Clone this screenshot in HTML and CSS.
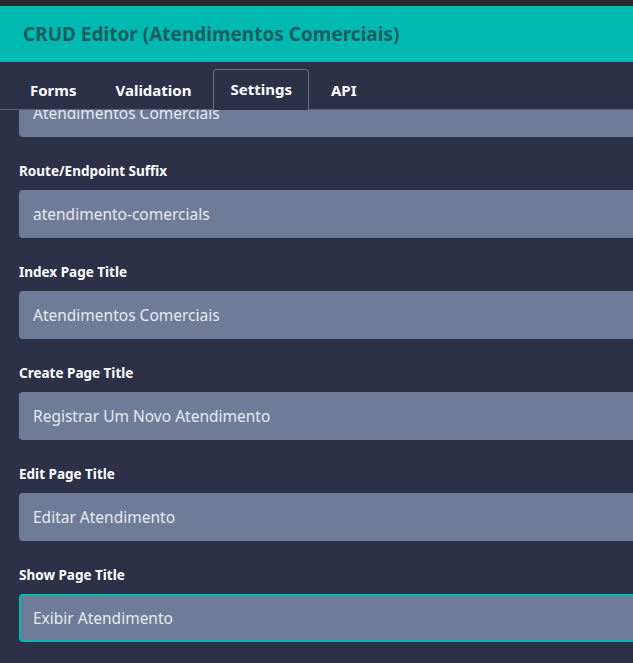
FILE: index.html
```html
<html>
  <head>
    <link rel="stylesheet" href="styles.css">
  </head>
  <body>
    <div class="topline"></div>
    <div class="header">CRUD Editor (Atendimentos Comerciais)</div>
    <div class="tabs">
      <div class="tab">Forms</div>
      <div class="tab">Validation</div>
      <div class="tab active">Settings</div>
      <div class="tab">API</div>
    </div>
    <div class="content">
      <div class="fields">
        <div class="field">
          <div class="input">Atendimentos Comerciais</div>
        </div>
        <div class="field">
          <div class="label">Route/Endpoint Suffix</div>
          <div class="input">atendimento-comercials</div>
        </div>
        <div class="field">
          <div class="label">Index Page Title</div>
          <div class="input">Atendimentos Comerciais</div>
        </div>
        <div class="field">
          <div class="label">Create Page Title</div>
          <div class="input">Registrar Um Novo Atendimento</div>
        </div>
        <div class="field">
          <div class="label">Edit Page Title</div>
          <div class="input">Editar Atendimento</div>
        </div>
        <div class="field">
          <div class="label">Show Page Title</div>
          <div class="input focused">Exibir Atendimento</div>
        </div>
      </div>
    </div>
  </body>
</html>
```

FILE: styles.css
```css
html, body {
  margin: 0;
  height: 100%;
  overflow: hidden;
}
body {
  background-color: #2c3148;
  font-family: "Noto Sans", sans-serif;
  color: #ffffff;
}
.topline {
  height: 6px;
  background-color: #282a2c;
}
.header {
  height: 56px;
  background-color: #00b9b1;
  color: #165d5f;
  font-size: 19px;
  font-weight: bold;
  line-height: 56px;
  padding-left: 23px;
}
.tabs {
  display: flex;
  align-items: flex-end;
  height: 48px;
  padding-left: 13px;
  gap: 5px;
  border-bottom: 1px solid #5d6480;
  box-sizing: border-box;
  position: relative;
  z-index: 1;
}
.tab {
  height: 40px;
  line-height: 39px;
  padding: 0 16px;
  font-size: 15px;
  font-weight: bold;
  border: 1px solid transparent;
  border-bottom: none;
  border-radius: 4px 4px 0 0;
  margin-bottom: -1px;
  box-sizing: border-box;
}
.tab.active {
  border-color: #6b7187;
  background-color: #2c3148;
  height: 41px;
}
.content {
  overflow: hidden;
  height: 560px;
}
.fields {
  margin-top: -21px;
  padding-left: 19px;
  width: 700px;
}
.field {
  margin-bottom: 24px;
}
.label {
  font-size: 13.5px;
  font-weight: bold;
  line-height: 20px;
  margin-bottom: 9px;
}
.input {
  height: 48px;
  line-height: 48px;
  background-color: #6f7c98;
  color: #e6e9ef;
  border-radius: 4px;
  padding-left: 14px;
  font-size: 15.5px;
  box-sizing: border-box;
}
.input.focused {
  border: 2px solid #00b9b1;
  line-height: 44px;
  padding-left: 12px;
}
```
